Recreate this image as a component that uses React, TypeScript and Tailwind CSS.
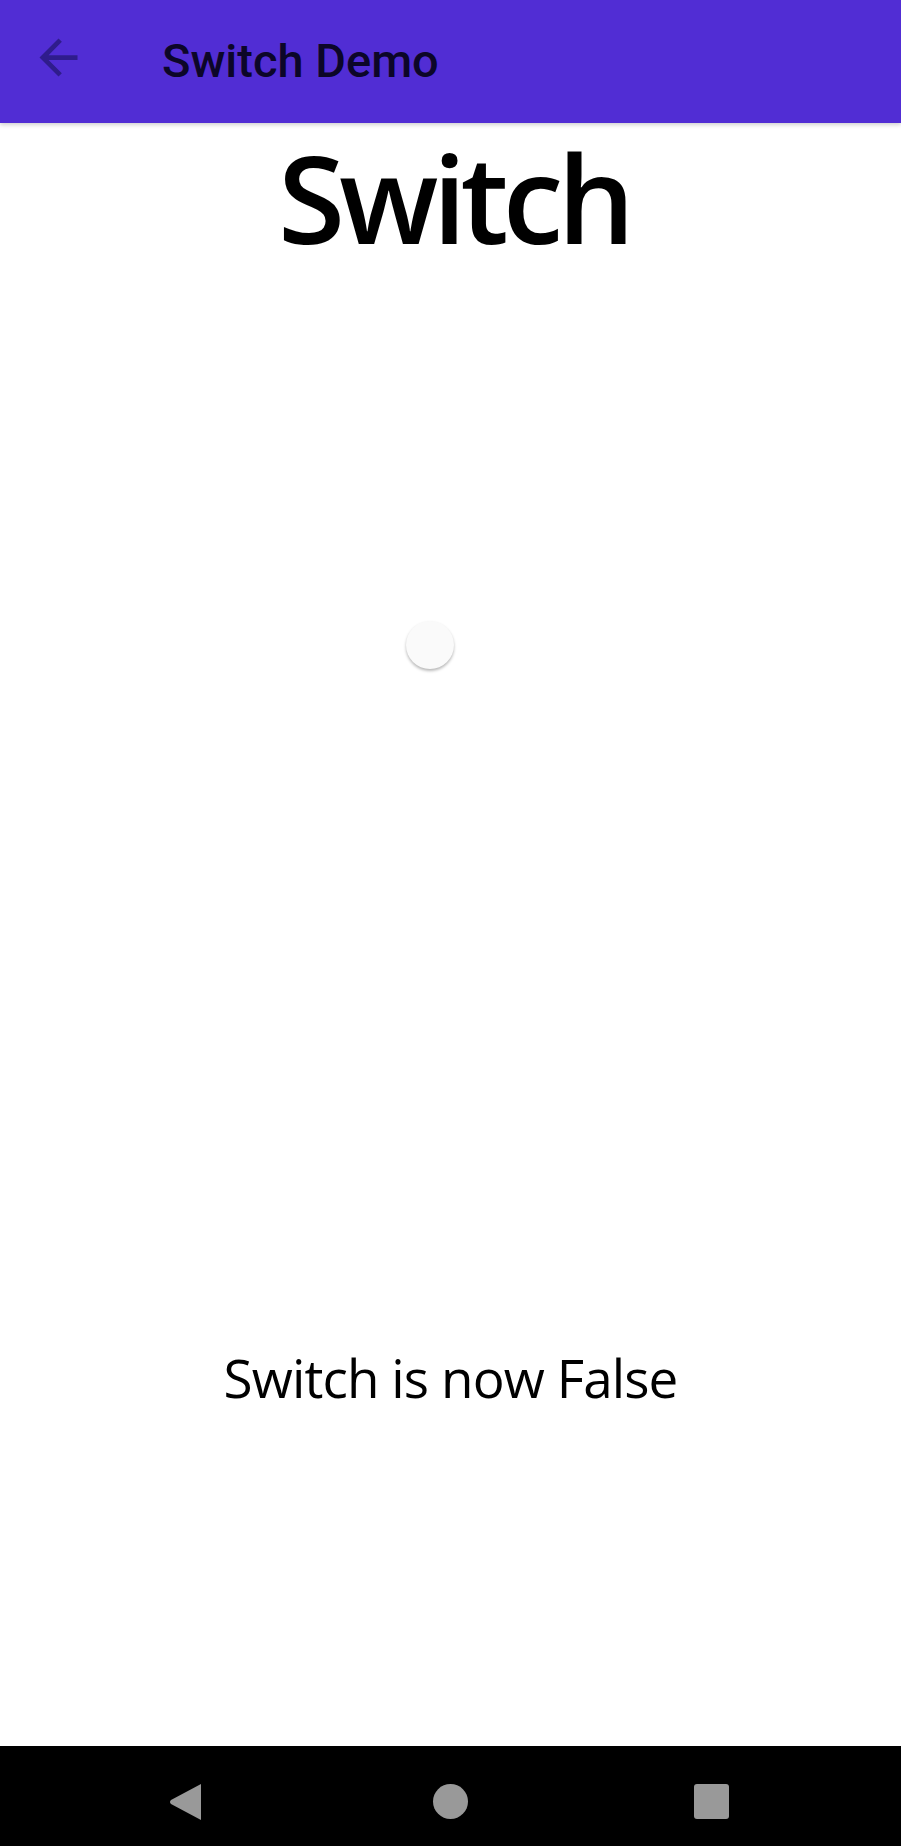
import React, { useState } from 'react';

export default function App() {
  const [on, setOn] = useState(false);

  return (
    <div className="flex flex-col h-[1846px] w-full bg-white overflow-hidden" style={{ fontFamily: '"Open Sans", sans-serif' }}>
      {/* APP BAR */}
      <div className="relative z-10 flex items-center h-[123px] shrink-0 bg-[#512dd4] pl-[30px] shadow-[0_2px_4px_rgba(0,0,0,0.18)]">
        <svg viewBox="0 0 24 24" className="w-[57px] h-[57px] -mt-[8px] shrink-0" fill="#2f1c8c">
          <path d="M20 11H7.83l5.59-5.59L12 4l-8 8 8 8 1.41-1.41L7.83 13H20v-2z" />
        </svg>
        <span
          className="ml-[75px] text-[47px] font-medium leading-none text-[#0c0628] -mt-[2px]"
          style={{ fontFamily: 'Roboto, sans-serif' }}
        >
          Switch Demo
        </span>
      </div>

      {/* CONTENT */}
      <div className="flex-1 flex flex-col items-center">
        <h1 className="mt-[13px] text-[122px] font-semibold leading-none tracking-[-6px] text-black translate-x-[3px]">Switch</h1>

        <button
          onClick={() => setOn(!on)}
          className="mt-[363px] w-[48px] h-[48px] rounded-full bg-[#fafafa] shadow-[0_2px_3px_rgba(0,0,0,0.28)] -translate-x-[21px] cursor-pointer"
        />

        <p className="mt-[682px] text-[53px] leading-none tracking-[-0.9px] text-black">
          Switch is now {on ? 'True' : 'False'}
        </p>
      </div>

      {/* NAV BAR */}
      <div className="h-[100px] shrink-0 bg-black flex items-center pt-[11px]">
        <div className="w-full flex items-center">
          <svg viewBox="0 0 36 38" className="ml-[168px] w-[36px] h-[38px]" fill="#999999">
            <path d="M33 1 L3 17 Q1 19 3 21 L33 37 Z" />
          </svg>
          <div className="ml-[229px] w-[35px] h-[35px] rounded-full bg-[#999999]" />
          <div className="ml-[226px] w-[35px] h-[35px] rounded-[3px] bg-[#999999]" />
        </div>
      </div>
    </div>
  );
}
